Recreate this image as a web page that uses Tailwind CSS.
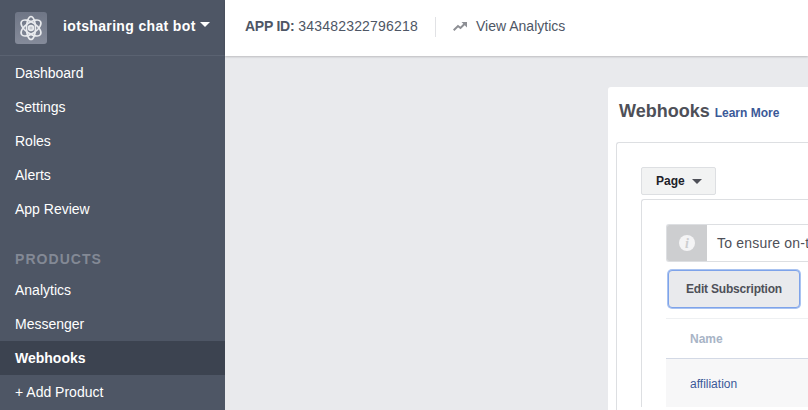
<!DOCTYPE html>
<html lang="en">
<head>
    <meta charset="UTF-8" />
    <title>Webhooks</title>
    <script src="https://cdn.jsdelivr.net/npm/@tailwindcss/browser@4"></script>
</head>
<body class="font-['Liberation_Sans',Arial,sans-serif]">
<div class="flex h-[410px] w-[808px] overflow-hidden bg-[#e9eaed]">
    <!-- sidebar -->
    <aside class="w-[225px] shrink-0 bg-[#4e5665] text-[14px] text-white">
        <div class="flex h-[56px] items-center border-b border-[#5a6271] pl-[15px]">
            <div class="flex h-[32px] w-[32px] items-center justify-center rounded-[3px] bg-gradient-to-b from-[#6f7686] to-[#858b9a]">
                <svg width="26" height="26" viewBox="0 0 26 26" fill="none" stroke="#e9ebee" stroke-width="1.6">
                    <ellipse cx="13" cy="13" rx="11.5" ry="5.5" transform="rotate(35 13 13)" />
                    <ellipse cx="13" cy="13" rx="11.5" ry="5.5" transform="rotate(-35 13 13)" />
                    <ellipse cx="13" cy="13" rx="4.5" ry="11.5" />
                    <circle cx="13" cy="13" r="2.4" fill="#c5c8cf" />
                </svg>
            </div>
            <span class="mb-[2px] ml-[16px] text-[14px] font-bold tracking-[0.35px]">iotsharing chat bot</span>
            <span class="mb-[6px] ml-[4px] h-0 w-0 border-x-[5px] border-t-[5px] border-x-transparent border-t-white"></span>
        </div>
        <nav class="flex flex-col">
            <a class="flex h-[34px] items-center pl-[15px]">Dashboard</a>
            <a class="flex h-[34px] items-center pl-[15px]">Settings</a>
            <a class="flex h-[34px] items-center pl-[15px]">Roles</a>
            <a class="flex h-[34px] items-center pl-[15px]">Alerts</a>
            <a class="flex h-[34px] items-center pl-[15px]">App Review</a>
            <div class="mt-[16px] flex h-[31px] items-center pl-[15px] pt-[3px] text-[14px] font-bold tracking-[1.05px] text-[#838995]">PRODUCTS</div>
            <a class="flex h-[34px] items-center pl-[15px]">Analytics</a>
            <a class="flex h-[34px] items-center pl-[15px]">Messenger</a>
            <a class="flex h-[34px] items-center bg-[#3c4350] pl-[15px] font-bold">Webhooks</a>
            <a class="flex h-[34px] items-center pl-[15px]">+ Add Product</a>
        </nav>
    </aside>
    <div class="flex min-w-0 flex-1 flex-col">
        <!-- top bar -->
        <header class="flex h-[56px] shrink-0 items-center bg-white pb-[3px] pl-[20px] text-[14px] text-[#4e5665] shadow-[0_1px_2px_rgba(0,0,0,0.2)]">
            <span><b class="font-bold tracking-[-0.25px]">APP ID:</b> <span class="tracking-[0.2px]">343482322796218</span></span>
            <span class="ml-[17px] h-[20px] w-px bg-[#e1e2e5]"></span>
            <svg class="ml-[17px]" width="14" height="9" viewBox="0 0 14 9" fill="none">
                <path d="M0.7 8.3 L5 4 L7.5 6 L11.5 2" stroke="#8d8f94" stroke-width="2" />
                <path d="M8.5 0 H14 V5.5 Z" fill="#8d8f94" />
            </svg>
            <span class="ml-[9px]">View Analytics</span>
        </header>
        <!-- content -->
        <main class="min-h-0 flex-1 pl-[383px] pt-[31px]">
            <section class="h-[400px] w-[400px] rounded-t-[3px] bg-white pl-[8px]">
                <div class="flex h-[55px] items-baseline pl-[3px] pt-[11px]">
                    <h1 class="text-[18px] font-bold text-[#4e5058]">Webhooks</h1>
                    <a class="ml-[5px] text-[12px] font-bold text-[#3b5998]">Learn More</a>
                </div>
                <div class="h-[300px] rounded-tl-[3px] border-l border-t border-[#dddfe2] pl-[24px] pt-[24px]">
                    <button class="flex h-[28px] w-[75px] items-center rounded-[2px] border border-[#dddfe2] bg-[#f2f3f3] pl-[14px] text-[12px] font-bold text-[#1d2129]">
                        Page
                        <span class="ml-[7px] h-0 w-0 border-x-[5px] border-t-[5px] border-x-transparent border-t-[#4e5058]"></span>
                    </button>
                    <div class="mt-[4px] rounded-tl-[3px] border-l border-t border-[#dddfe2] pl-[24px] pt-[24px]">
                        <div class="flex h-[38px] overflow-hidden rounded-l-[3px] border border-r-0 border-[#dddfe2]">
                            <div class="flex w-[40px] shrink-0 items-center justify-center bg-[#cdced0]">
                                <span class="flex h-[16px] w-[16px] items-center justify-center rounded-full bg-[#f4f4f5] font-['Liberation_Serif',serif] text-[14px] font-bold italic text-[#cdced0]">i</span>
                            </div>
                            <div class="flex items-center whitespace-nowrap pl-[10px] text-[14px] tracking-[0.2px] text-[#4e5058]">To ensure on-time delivery of your messages</div>
                        </div>
                        <button class="ml-[2px] mt-[8px] flex h-[38px] w-[132px] items-center justify-center rounded-[4px] border border-[#7ea3ea] bg-[#e9eaed] text-[12px] font-bold tracking-[-0.2px] text-[#4e5058] shadow-[0_0_0_1px_#a9c3f1]">Edit Subscription</button>
                        <div class="mt-[10px] flex h-[41px] items-center border-b border-t border-b-[#d3d9e5] border-t-[#eef0f2] pl-[24px] text-[12px] font-bold text-[#a8b4c6]">Name</div>
                        <div class="flex h-[48px] items-center bg-[#f7f7f8] pl-[24px] pt-[1px] text-[12px] text-[#3b5998]">affiliation</div>
                    </div>
                </div>
            </section>
        </main>
    </div>
</div>
</body>
</html>
